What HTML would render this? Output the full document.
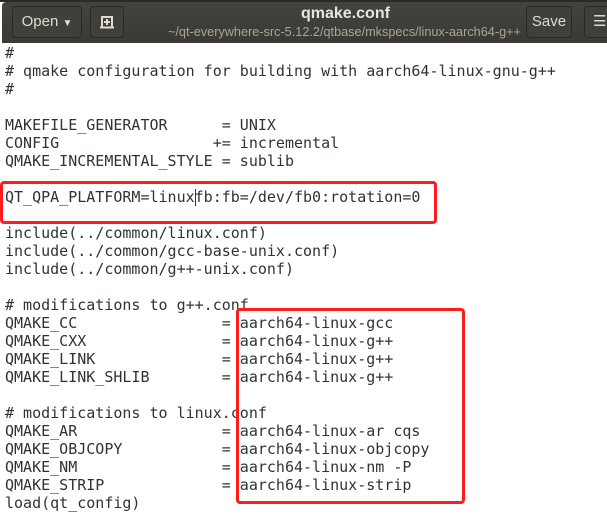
<!DOCTYPE html>
<html><head><meta charset="utf-8"><style>
body{margin:0;width:607px;height:529px;overflow:hidden;background:#fff;position:relative;font-family:"Liberation Sans",sans-serif}
#top{position:absolute;left:0;top:0;width:607px;height:2px;background:#2b2a27}
#hdr{position:absolute;left:2px;top:2px;width:605px;height:41px;background:linear-gradient(#45433e,#3a3935);border-top-left-radius:4px}
.btn{position:absolute;top:4px;height:32px;border:1px solid #2a2926;border-radius:4px;background:#403f3a;box-sizing:border-box;color:#dfdbd2;font-size:15px;line-height:30px;text-align:center}
#title{position:absolute;left:299px;top:3px;color:#e8e5de;font-weight:bold;font-size:16px}
#path{position:absolute;left:166px;top:23px;color:#a9a59c;font-size:12.7px;white-space:nowrap}
pre{position:absolute;left:5px;top:44px;margin:0;font-family:"DejaVu Sans Mono","Liberation Mono",monospace;font-size:15px;line-height:18px;color:#2e3436}
.box{position:absolute;border:3px solid #ff1c1c;border-radius:4px;box-sizing:border-box}
#caret{position:absolute;left:195px;top:189px;width:1px;height:17px;background:#333}
</style></head><body>
<div id="top"></div>
<div id="hdr">
 <div id="title">qmake.conf</div>
 <div id="path">~/qt-everywhere-src-5.12.2/qtbase/mkspecs/linux-aarch64-g++</div>
 <div class="btn" style="left:10px;width:70px">Open <span style="font-size:10px">▼</span></div>
 <div class="btn" style="left:88px;width:34px"><svg width="16" height="16" viewBox="0 0 16 16" style="margin-top:7px"><path d="M3 13V3h10v10M1 13.5h14M8 5v6M5 8h6" stroke="#dfdbd2" stroke-width="2" fill="none"/></svg></div>
 <div class="btn" style="left:524px;width:46px">Save</div>
 <div class="btn" style="left:582px;width:40px;text-align:left;padding-left:8px">☰</div>
</div>
<pre>#
# qmake configuration for building with aarch64-linux-gnu-g++
#

MAKEFILE_GENERATOR      = UNIX
CONFIG                 += incremental
QMAKE_INCREMENTAL_STYLE = sublib

QT_QPA_PLATFORM=linuxfb:fb=/dev/fb0:rotation=0

include(../common/linux.conf)
include(../common/gcc-base-unix.conf)
include(../common/g++-unix.conf)

# modifications to g++.conf
QMAKE_CC                = aarch64-linux-gcc
QMAKE_CXX               = aarch64-linux-g++
QMAKE_LINK              = aarch64-linux-g++
QMAKE_LINK_SHLIB        = aarch64-linux-g++

# modifications to linux.conf
QMAKE_AR                = aarch64-linux-ar cqs
QMAKE_OBJCOPY           = aarch64-linux-objcopy
QMAKE_NM                = aarch64-linux-nm -P
QMAKE_STRIP             = aarch64-linux-strip
load(qt_config)</pre>
<div id="caret"></div>
<div class="box" style="left:0;top:181px;width:437px;height:43px"></div>
<div class="box" style="left:236px;top:308px;width:229px;height:196px"></div>
</body></html>
